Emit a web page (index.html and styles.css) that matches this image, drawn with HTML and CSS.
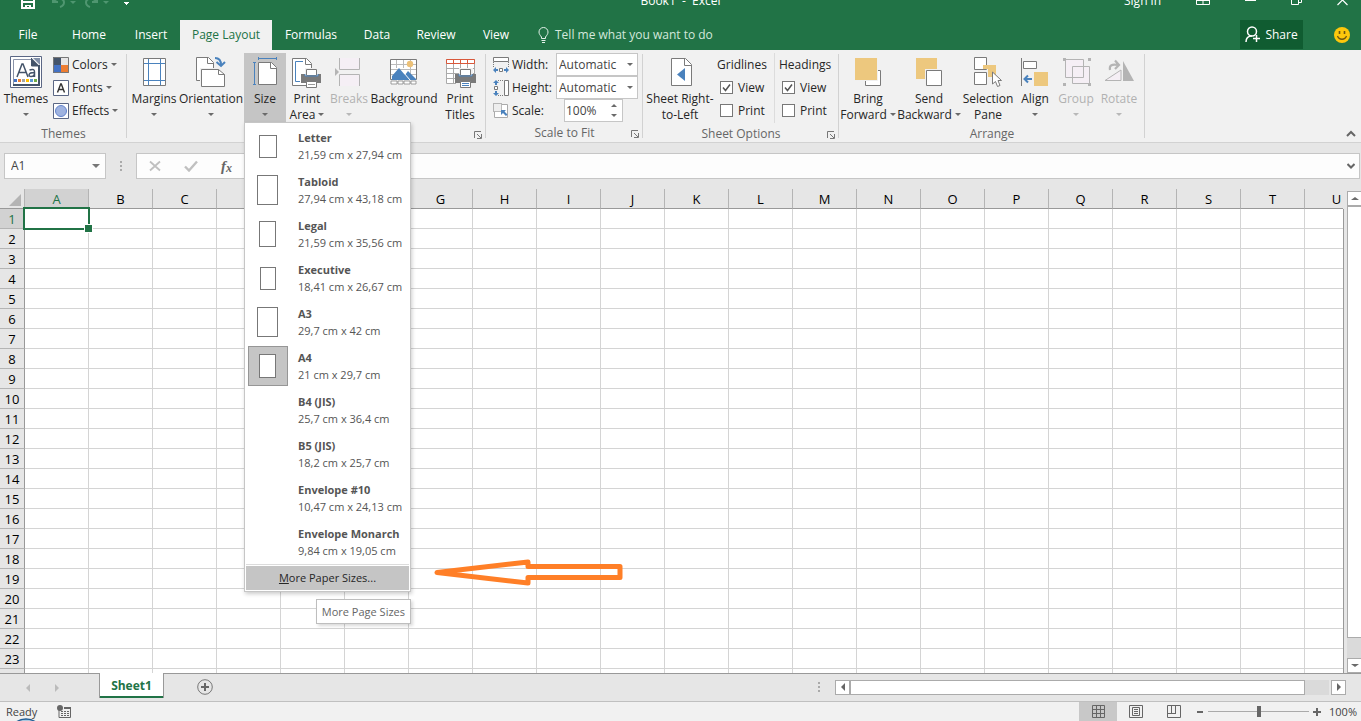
FILE: index.html
```html
<!DOCTYPE html>
<html lang="en">
<head>
<meta charset="utf-8">
<title>Book1 - Excel</title>
<link rel="stylesheet" href="styles.css">
</head>
<body>
<header class="top">
  <div class="titlebar">
    <div class="quick">
      <button class="plain" aria-label="Save"><svg width="14" height="16" viewBox="0 0 14 16"><path d="M1 2v13h12V2" fill="none" stroke="#fff" stroke-width="2"/><path d="M2 8h10v2H2zM4 15v-3h6v3H8v-2H6v2z" fill="#fff"/></svg></button>
      <button class="plain undo" aria-label="Undo"><svg width="26" height="16" viewBox="0 0 26 16"><path d="M2 5v4h5M2 9C6 4 13 5 13 9.500c0 2-1 3.500-4 4.500" fill="none" stroke="#4f9670" stroke-width="2"/><path d="M19 8h6l-3 3z" fill="#4f9670"/></svg></button>
      <button class="plain redo" aria-label="Redo"><svg width="26" height="16" viewBox="0 0 26 16"><path d="M13 5v4H8M13 9C9 4 2 5 2 9.500c0 2 1 3.500 4 4.500" fill="none" stroke="#4f9670" stroke-width="2"/><path d="M19 8h6l-3 3z" fill="#4f9670"/></svg></button>
      <button class="plain" aria-label="Customize"><svg width="7" height="16" viewBox="0 0 7 16"><path d="M1 6h5v1H1zM1 9h5v1h-1v1h-1v1h-1v-1h-1v-1h-1z" fill="#fff"/></svg></button>
    </div>
    <div class="doc-title">Book1&nbsp; - &nbsp;Excel</div>
    <div class="window">
      <a href="#" class="signin">Sign in</a>
      <button class="plain" aria-label="Ribbon display"><svg width="14" height="16" viewBox="0 0 14 16"><path d="M.5 3v8.500h13V3M.5 7.500h13M7 11V5" fill="none" stroke="#fff"/></svg></button>
      <button class="plain" aria-label="Minimize"><svg width="11" height="16" viewBox="0 0 11 16"><path d="M0 7.500h11" stroke="#fff"/></svg></button>
      <button class="plain" aria-label="Restore"><svg width="11" height="16" viewBox="0 0 11 16"><path d="M.5 5v6.500h7V5zM7 9.500h3.500V4" fill="none" stroke="#fff"/></svg></button>
      <button class="plain" aria-label="Close"><svg width="11" height="16" viewBox="0 0 11 16"><path d="M.5 2l10 10M10.500 2l-10 10" stroke="#fff" stroke-width="1.200"/></svg></button>
    </div>
  </div>
  <nav class="tabs">
    <button class="tab t-file">File</button>
    <button class="tab t-home">Home</button>
    <button class="tab t-insert">Insert</button>
    <button class="tab t-page active">Page Layout</button>
    <button class="tab t-formulas">Formulas</button>
    <button class="tab t-data">Data</button>
    <button class="tab t-review">Review</button>
    <button class="tab t-view">View</button>
    <button class="tell"><svg width="11" height="16" viewBox="0 0 11 16"><path d="M3.500 11.500V10C2 8 1 7 1 5a4.500 4.500 0 0 1 9 0c0 2-1 3-2.500 5v1.500zM3.500 13.500h4M4 15.500h3" fill="none" stroke="#e4f1ea"/></svg>Tell me what you want to do</button>
    <button class="share"><svg width="16" height="17" viewBox="0 0 16 17"><circle cx="7" cy="5.500" r="4.500" fill="none" stroke="#fff" stroke-width="1.500"/><path d="M1 16c0-4 2-6 6-6M11.500 9v7M8 12.500h7" fill="none" stroke="#fff" stroke-width="1.500"/></svg>Share</button>
    <button class="plain smile" aria-label="Feedback"><svg width="16" height="16" viewBox="0 0 16 16"><circle cx="8" cy="8" r="8" fill="#fdc70c"/><path d="M5.500 4v3M10.500 4v3" stroke="#6b5413" stroke-width="1.600"/><path d="M3.500 9c1.500 4.300 7.500 4.300 9 0" fill="none" stroke="#6b5413" stroke-width="1.300"/></svg></button>
  </nav>
</header>

<section class="ribbon">
  <div class="group g-themes">
    <div class="tools">
      <button class="big w-themes">
        <svg width="32" height="32" viewBox="0 0 32 32"><path d="M.5.500h31v31H.5z" fill="#fff" stroke="#5b6785"/><path d="M3.500 3.500h18l7 7v18h-25z" fill="#fff" stroke="#8a93a8"/><path d="M3 29h26V9" fill="none" stroke="#44546a" stroke-width="2"/><path d="M21.500 2v8h8" fill="#44546a" stroke="#44546a"/><path d="M23 2h7v7z" fill="#8290a8"/><path d="M7 21l5-13h1l5 13M9 16.500h7" fill="none" stroke="#44546a" stroke-width="1.500"/><path d="M19.500 14c4-1.500 5 0 5 2v5M24 16.500c-6 0-6 4-3 4 2 0 3-1 3-2" fill="none" stroke="#44546a" stroke-width="1.500"/><path d="M4 23h3v3H4z" fill="#4472c4"/><path d="M8 23h3v3H8z" fill="#ed7d31"/><path d="M12 23h3v3h-3z" fill="#a5a5a5"/><path d="M16 23h3v3h-3z" fill="#ffc000"/><path d="M20 23h3v3h-3z" fill="#5b9bd5"/><path d="M24 23h3v3h-3z" fill="#70ad47"/></svg>
        <span>Themes</span><i class="caret"></i>
      </button>
      <div class="stack">
        <button class="small"><svg width="16" height="16" viewBox="0 0 16 16"><path d="M0 0h8v8H0z" fill="#44546a"/><path d="M8 0h8v8H8z" fill="#e7e6e6"/><path d="M0 8h8v8H0z" fill="#4472c4"/><path d="M8 8h8v8H8z" fill="#ed7d31"/><path d="M.5.500h15v15H.5z" fill="none" stroke="#777"/></svg>Colors<i class="caret"></i></button>
        <button class="small"><svg width="16" height="16" viewBox="0 0 16 16"><path d="M.5.500h15v15H.5z" fill="#fff" stroke="#5b6785"/><path d="M4.500 12.500L7.700 4h.6l3.200 8.500M5.500 9.500h5" fill="none" stroke="#333" stroke-width="1.400"/></svg>Fonts<i class="caret"></i></button>
        <button class="small"><svg width="16" height="16" viewBox="0 0 16 16"><path d="M.5.500h15v15H.5z" fill="#fff" stroke="#5b6785"/><circle cx="8" cy="8" r="5.500" fill="#9fb3e0" stroke="#6484cc"/></svg>Effects<i class="caret"></i></button>
      </div>
    </div>
    <div class="caption">Themes</div>
  </div>

  <div class="group g-setup">
    <div class="tools">
      <button class="big w-margins">
        <svg width="32" height="32" viewBox="0 0 32 32"><path d="M5.500 2.500h22v27h-22z" fill="#fff" stroke="#7a7a7a"/><path d="M10.500 3v26M22.500 3v26M6 7.500h21M6 24.500h21" stroke="#4a82bd"/></svg>
        <span>Margins</span><i class="caret"></i>
      </button>
      <button class="big w-orient">
        <svg width="32" height="32" viewBox="0 0 32 32"><path d="M1.500 1.500h12l5 5v18h-17z" fill="#fff" stroke="#7a7a7a"/><path d="M12.500 1.500v6h6" fill="none" stroke="#7a7a7a"/><path d="M5 12h27v20H5z" fill="#f0f0f0"/><path d="M6.500 13.500h17l6 5v12h-23z" fill="#fff" stroke="#7a7a7a"/><path d="M23.500 13.500v5h6" fill="none" stroke="#7a7a7a"/><path d="M20 2c4 0 6 2 6 7" fill="none" stroke="#4a82bd" stroke-width="2"/><path d="M21.500 6l4.500 4 4-4" fill="none" stroke="#4a82bd" stroke-width="2"/></svg>
        <span>Orientation</span><i class="caret"></i>
      </button>
      <div class="dropdown">
        <button class="big w-size open" aria-haspopup="true" aria-expanded="true">
          <svg width="32" height="32" viewBox="0 0 32 32"><path d="M9.500 6.500h13l5 5v17h-18z" fill="#fff" stroke="#7a7a7a"/><path d="M21.500 6.500v6h6" fill="none" stroke="#7a7a7a"/><path d="M9 2.500h18M9.500 1v3M27.500 1v3M5.500 6v23M4 6.500h3M4 28.500h3" stroke="#4a82bd"/></svg>
          <span>Size</span><i class="caret"></i>
        </button>
        <div class="menu">
          <button class="paper"><span class="thumb"><i class="p-letter"></i></span><span><b>Letter</b><br>21,59 cm x 27,94 cm</span></button>
          <button class="paper"><span class="thumb"><i class="p-tabloid"></i></span><span><b>Tabloid</b><br>27,94 cm x 43,18 cm</span></button>
          <button class="paper"><span class="thumb"><i class="p-legal"></i></span><span><b>Legal</b><br>21,59 cm x 35,56 cm</span></button>
          <button class="paper"><span class="thumb"><i class="p-exec"></i></span><span><b>Executive</b><br>18,41 cm x 26,67 cm</span></button>
          <button class="paper"><span class="thumb"><i class="p-tabloid"></i></span><span><b>A3</b><br>29,7 cm x 42 cm</span></button>
          <button class="paper"><span class="thumb chosen"><i class="p-a4"></i></span><span><b>A4</b><br>21 cm x 29,7 cm</span></button>
          <button class="paper"><span class="thumb"></span><span><b>B4 (JIS)</b><br>25,7 cm x 36,4 cm</span></button>
          <button class="paper"><span class="thumb"></span><span><b>B5 (JIS)</b><br>18,2 cm x 25,7 cm</span></button>
          <button class="paper"><span class="thumb"></span><span><b>Envelope #10</b><br>10,47 cm x 24,13 cm</span></button>
          <button class="paper"><span class="thumb"></span><span><b>Envelope Monarch</b><br>9,84 cm x 19,05 cm</span></button>
          <button class="more"><span><u>M</u>ore Paper Sizes...</span></button>
          <div class="tip" role="tooltip">More Page Sizes</div>
        </div>
      </div>
      <button class="big w-area">
        <svg width="32" height="32" viewBox="0 0 32 32"><path d="M1.500 2.500h14l5 5v22h-19z" fill="#fff" stroke="#7a7a7a"/><path d="M14.500 2.500v6h6" fill="none" stroke="#7a7a7a"/><path d="M12 5.500H4.500v20H9" fill="none" stroke="#4a82bd"/><path d="M14 12h14v6H14z" fill="#f0f0f0"/><path d="M15.500 13.500h10v6h-10z" fill="#fff" stroke="#7a7a7a"/><path d="M10 18h4v2h13v-2h3v9H10z" fill="#7a7a7a"/><path d="M14 18v2h13v-2" fill="none" stroke="#4a82bd"/><path d="M15.500 25.500h10v6h-10z" fill="#fff" stroke="#7a7a7a"/><path d="M17 28.500h7" stroke="#999"/></svg>
        <span>Print</span><span>Area<i class="caret side"></i></span>
      </button>
      <button class="big w-breaks off" disabled>
        <svg width="32" height="32" viewBox="0 0 32 32"><path d="M6 2h20v12H6zM6 19h20v11H6z" fill="#f5eff5"/><path d="M6.500 2v11.500h20V2M6.500 30V18.500h20V30" fill="none" stroke="#b4b4b4"/><path d="M2 12l4 4-4 4z" fill="#b4b4b4"/></svg>
        <span>Breaks</span><i class="caret"></i>
      </button>
      <button class="big w-back">
        <svg width="32" height="32" viewBox="0 0 32 32"><path d="M2.500 3.500h26v20h-26z" fill="#fff" stroke="#7a7a7a"/><path d="M8.500 4v8M15.500 4v8M22.500 4v19M3 8.500h25M3 13.500h25M3 18.500h25" stroke="#bbb"/><circle cx="22" cy="8" r="3.200" fill="#ecc178"/><path d="M4 24v-4l7-8 6 7 3-4 8 8v1z" fill="#4a82bd"/><path d="M16 17l6 7" stroke="#fff"/><path d="M3 25h6v3H3zM10 25h5v3h-5zM16 25h6v3h-6zM23 25h5v3h-5z" fill="#fff" stroke="#888" stroke-width=".8"/></svg>
        <span>Background</span>
      </button>
      <button class="big w-titles">
        <svg width="32" height="32" viewBox="0 0 32 32"><path d="M2.500 3.500h28v24h-28z" fill="#fff" stroke="#aaa"/><path d="M9.500 4v23M16.500 4v23M23.500 4v14M3 12.500h27M3 17.500h27M3 22.500h14" stroke="#aaa"/><path d="M2.500 3.500h28v4h-28zM9.500 3v5M16.500 3v5M23.500 3v5" fill="none" stroke="#d9583b"/><path d="M12 18h3v-6h14v6h3v14H15v-4h-3z" fill="#f0f0f0"/><path d="M16.500 13.500h10v6h-10z" fill="#fff" stroke="#7a7a7a"/><path d="M11 18h4v2h13v-2h4v9H11z" fill="#7a7a7a"/><path d="M15 18v2h13v-2" fill="none" stroke="#4a82bd"/><path d="M16.500 25.500h10v6h-10z" fill="#fff" stroke="#7a7a7a"/><path d="M18 27.500h7M18 29.500h7" stroke="#4a82bd"/></svg>
        <span>Print</span><span>Titles</span>
      </button>
    </div>
    <div class="caption"><button class="plain launch" aria-label="Page setup options"><svg width="8" height="8" viewBox="0 0 8 8"><path d="M.5 7V.5H7M3 3l4 4M7.500 3v4.500H3" fill="none" stroke="#777"/></svg></button></div>
  </div>

  <div class="group g-scale">
    <div class="tools">
      <div class="stack">
        <div class="field"><svg width="16" height="16" viewBox="0 0 16 16"><path d="M.5.500h15v4H.5z" fill="#fff" stroke="#7a7a7a"/><path d="M.5 5v6M15.500 5v6" stroke="#7a7a7a" stroke-dasharray="1 1"/><path d="M6.500 11.500h3v3h-3z" fill="#fff" stroke="#7a7a7a"/><path d="M0 13l3-3v2h2v2H3v2zM16 13l-3-3v2h-2v2h2v2z" fill="#4a82bd"/></svg><label for="w">Width:</label><span class="combo"><select id="w"><option>Automatic</option></select><i class="caret"></i></span></div>
        <div class="field"><svg width="16" height="16" viewBox="0 0 16 16"><path d="M11.500.500h4v15h-4z" fill="#fff" stroke="#7a7a7a"/><path d="M5 .5h6M5 15.500h6" stroke="#7a7a7a" stroke-dasharray="1 1"/><path d="M1.500 6.500h3v3h-3z" fill="#fff" stroke="#7a7a7a"/><path d="M3 0l3 3H4v2H2V3H0zM3 16l3-3H4v-2H2v2H0z" fill="#4a82bd"/></svg><label for="h">Height:</label><span class="combo"><select id="h"><option>Automatic</option></select><i class="caret"></i></span></div>
        <div class="field"><svg width="16" height="16" viewBox="0 0 16 16"><path d="M1.500 9v5.500h13v-13H9" fill="#fff" stroke="#aaa"/><path d="M.5.500h8v8h-8z" fill="#eee" stroke="#7a7a7a" stroke-dasharray="1 1"/><path d="M8 7h5l-1.500 1.500 3 3-1.500 1.500-3-3L8 12z" fill="#4a82bd"/></svg><label for="s">Scale:</label><span class="spin"><input id="s" type="text" value="100%"><span class="arrows"><button class="plain" aria-label="Increase"><i class="caret up"></i></button><button class="plain" aria-label="Decrease"><i class="caret"></i></button></span></span></div>
      </div>
    </div>
    <div class="caption">Scale to Fit<button class="plain launch" aria-label="Scale options"><svg width="8" height="8" viewBox="0 0 8 8"><path d="M.5 7V.5H7M3 3l4 4M7.500 3v4.500H3" fill="none" stroke="#777"/></svg></button></div>
  </div>

  <div class="group g-sheet">
    <div class="tools">
      <button class="big w-rtl">
        <svg width="32" height="32" viewBox="0 0 32 32"><path d="M7.500 2.500h14l6 6v21h-20z" fill="#fff" stroke="#7a7a7a"/><path d="M20.500 2.500v7h7" fill="none" stroke="#7a7a7a"/><path d="M21 12v13l-8-6.500z" fill="#4a82bd"/></svg>
        <span>Sheet Right-</span><span>to-Left</span>
      </button>
      <div class="stack checks c-grid"><span class="head">Gridlines</span><label><input type="checkbox" checked>View</label><label><input type="checkbox">Print</label></div>
      <div class="stack checks c-head"><span class="head">Headings</span><label><input type="checkbox" checked>View</label><label><input type="checkbox">Print</label></div>
    </div>
    <div class="caption">Sheet Options<button class="plain launch" aria-label="Sheet options"><svg width="8" height="8" viewBox="0 0 8 8"><path d="M.5 7V.5H7M3 3l4 4M7.500 3v4.500H3" fill="none" stroke="#777"/></svg></button></div>
  </div>

  <div class="group g-arrange">
    <div class="tools">
      <button class="big w-58">
        <svg width="32" height="32" viewBox="0 0 32 32"><path d="M13.500 14.500h15v15h-15z" fill="#fff" stroke="#7a7a7a"/><path d="M3 2h22v22H3z" fill="#edc87e" /><path d="M25.500 2v22.500H3" fill="none" stroke="#f0f0f0"/></svg>
        <span>Bring</span><span>Forward<i class="caret side"></i></span>
      </button>
      <button class="big w-64">
        <svg width="32" height="32" viewBox="0 0 32 32"><path d="M3 2h21v21H3z" fill="#edc87e"/><path d="M12 13h18v18H12z" fill="#f0f0f0"/><path d="M13.500 14.500h15v15h-15z" fill="#fff" stroke="#7a7a7a"/></svg>
        <span>Send</span><span>Backward<i class="caret side"></i></span>
      </button>
      <button class="big w-54">
        <svg width="32" height="32" viewBox="0 0 32 32"><path d="M2.500 1.500h12v12h-12zM2.500 16.500h12v12h-12z" fill="#fff" stroke="#7a7a7a"/><path d="M11 9h13v12h-8v-8h-5z" fill="#edc87e"/><path d="M20.500 16v12l3-2.500 2 5 2.500-1-2-5h3.500z" fill="#fff" stroke="#7a7a7a"/></svg>
        <span>Selection</span><span>Pane</span>
      </button>
      <button class="big w-40">
        <svg width="32" height="32" viewBox="0 0 32 32"><path d="M2.500 2v28" stroke="#7a7a7a"/><path d="M4.500 5.500h13v7h-13z" fill="#fff" stroke="#7a7a7a"/><path d="M15 16h14v14H15z" fill="#edc87e"/><path d="M13 23H6M9 19.500L5.500 23 9 26.500" fill="none" stroke="#4a82bd" stroke-width="2"/></svg>
        <span>Align</span><i class="caret"></i>
      </button>
      <button class="big w-42 off" disabled>
        <svg width="32" height="32" viewBox="0 0 32 32"><path d="M5.500 3.500h18v18h-18zM12.500 10.500h17v17h-17z" fill="#f5eff5"/><path d="M5.500 3.500h18v18h-18zM12.500 10.500h17v17h-17z" fill="none" stroke="#b4b4b4"/><path d="M3 2h3v3H3zM28 2h3v3h-3zM3 27h3v3H3zM28 27h3v3h-3z" fill="#b4b4b4"/></svg>
        <span>Group</span><i class="caret"></i>
      </button>
      <button class="big w-44 off" disabled>
        <svg width="32" height="32" viewBox="0 0 32 32"><path d="M18 14v10.500H2z" fill="#f5eff5" stroke="#b4b4b4"/><path d="M20 5v20h11z" fill="#b4b4b4"/><path d="M7 14c-1-5 2-6 8-5M12 4.500l4 4.500-4 4" fill="none" stroke="#b4b4b4" stroke-width="2.200"/></svg>
        <span>Rotate</span><i class="caret"></i>
      </button>
    </div>
    <div class="caption">Arrange</div>
  </div>
  <button class="plain collapse" aria-label="Collapse ribbon"><svg width="10" height="7" viewBox="0 0 10 7"><path d="M1 6l4-4 4 4" fill="none" stroke="#666" stroke-width="2"/></svg></button>
</section>

<section class="formula">
  <div class="namebox"><input type="text" value="A1" aria-label="Name box"><svg width="8" height="4" viewBox="0 0 8 4"><path d="M0 0h8L4 4z" fill="#777"/></svg></div>
  <span class="dots"><i></i><i></i><i></i></span>
  <div class="entry">
    <button class="plain" aria-label="Cancel"><svg width="12" height="12" viewBox="0 0 12 12"><path d="M1 1.500l10 9M11 1.500l-10 9" stroke="#c0c0c0" stroke-width="1.800"/></svg></button>
    <button class="plain" aria-label="Enter"><svg width="14" height="12" viewBox="0 0 14 12"><path d="M1 6.500l4 4 8-9" fill="none" stroke="#c0c0c0" stroke-width="2.400"/></svg></button>
    <button class="plain fx">f<small>x</small></button>
    <input type="text" aria-label="Formula bar">
    <button class="plain" aria-label="Expand"><svg width="8" height="6" viewBox="0 0 8 6"><path d="M.5 1L4 4.500 7.500 1" fill="none" stroke="#666" stroke-width="2"/></svg></button>
  </div>
</section>

<main class="sheet">
  <div class="cells"><table id="grid"></table></div>
  <div class="edge"></div>
  <div class="vscroll">
    <button class="plain sbtn" aria-label="Scroll up"><i class="caret up"></i></button>
    <div class="vthumb"></div>
    <div class="vtrack"></div>
    <button class="plain sbtn" aria-label="Scroll down"><i class="caret"></i></button>
  </div>
  <svg class="pointer" width="192" height="32" viewBox="0 0 192 32"><path d="M4 15.500L95 5v4.500h92v11H95V26z" fill="none" stroke="#ff7f27" stroke-width="5" stroke-linejoin="round"/></svg>
</main>

<footer>
  <div class="sheetbar">
    <div class="nav">
      <button class="plain" aria-label="Previous sheet"><svg width="4" height="8" viewBox="0 0 4 8"><path d="M4 0v8L0 4z" fill="#bbb"/></svg></button>
      <button class="plain" aria-label="Next sheet"><svg width="4" height="8" viewBox="0 0 4 8"><path d="M0 0v8l4-4z" fill="#bbb"/></svg></button>
    </div>
    <button class="sheet-tab">Sheet1</button>
    <button class="plain add" aria-label="New sheet"><svg width="16" height="16" viewBox="0 0 16 16"><circle cx="8" cy="8" r="7.300" fill="none" stroke="#777"/><path d="M8 4v8M4 8h8" stroke="#666" stroke-width="2"/></svg></button>
    <span class="dots hdots"><i></i><i></i><i></i></span>
    <div class="hscroll">
      <button class="plain hbtn" aria-label="Scroll left"><svg width="4" height="8" viewBox="0 0 4 8"><path d="M4 0v8L0 4z" fill="#666"/></svg></button>
      <div class="hthumb"></div>
      <div class="htrack"></div>
      <button class="plain hbtn" aria-label="Scroll right"><svg width="4" height="8" viewBox="0 0 4 8"><path d="M0 0v8l4-4z" fill="#666"/></svg></button>
    </div>
  </div>
  <div class="status">
    <span class="ready">Ready</span>
    <svg width="14" height="13" viewBox="0 0 14 13"><path d="M2 5v7.500h11.500V3H8" fill="none" stroke="#666"/><circle cx="3" cy="3" r="3" fill="#666"/><path d="M7 2h7v2H7z" fill="#666"/><path d="M4 6.500h2M7 6.500h2M10 6.500h2M4 8.500h2M7 8.500h2M10 8.500h2M4 10.500h2M7 10.500h2M10 10.500h2" stroke="#666"/></svg>
    <svg class="orb" width="24" height="3" viewBox="0 0 24 3"><ellipse cx="12" cy="12" rx="14" ry="11" fill="#a9c8e0" stroke="#1f5c94" stroke-width="1.500"/></svg>
    <div class="views">
      <button class="plain on" aria-label="Normal"><svg width="13" height="13" viewBox="0 0 13 13"><path d="M.5.500h12v12H.5zM4.500 0v13M8.500 0v13M0 4.500h13M0 8.500h13" fill="none" stroke="#666"/></svg></button>
      <button class="plain" aria-label="Page layout"><svg width="14" height="13" viewBox="0 0 14 13"><path d="M.5.500h13v12H.5zM3.500 2.500h7v8h-7zM5 4.500h4M5 6.500h4M5 8.500h4" fill="none" stroke="#666"/></svg></button>
      <button class="plain" aria-label="Page break"><svg width="14" height="13" viewBox="0 0 14 13"><path d="M.5.500h13v12H.5zM4.500 1v7M8.500 1v7.500M1 8.500h8" fill="none" stroke="#666"/></svg></button>
    </div>
    <div class="zoom">
      <button class="plain" aria-label="Zoom out"><svg width="7" height="8" viewBox="0 0 7 8"><path d="M0 4h6" stroke="#666" stroke-width="2"/></svg></button>
      <input type="range" min="10" max="190" value="100" aria-label="Zoom">
      <button class="plain" aria-label="Zoom in"><svg width="8" height="8" viewBox="0 0 8 8"><path d="M0 4h8M4 0v8" stroke="#666" stroke-width="2"/></svg></button>
      <button class="plain pct">100%</button>
    </div>
  </div>
</footer>
<script src="grid.js"></script>
</body>
</html>
```
FILE: styles.css
```css
* { box-sizing: border-box; }
body {
  margin: 0; height: 100vh; overflow: hidden;
  display: flex; flex-direction: column;
  font: 12px/16px "Open Sans", "Noto Sans", sans-serif;
  color: #262626; background: #e6e6e6;
}
button, input, select { font: inherit; color: inherit; margin: 0; }
button { border: 0; background: none; padding: 0; white-space: nowrap; }
.plain { display: flex; align-items: center; justify-content: center; }
svg { display: block; flex: none; }
.caret { display: block; width: 0; height: 0; border: 3px solid transparent; border-top-color: #6a6a6a; border-bottom: 0; }
.caret.up { border-top: 0; border-bottom: 3px solid #6a6a6a; }

.top { background: #217346; color: #fff; }
.titlebar { height: 20px; overflow: hidden; display: grid; grid-template-columns: 1fr auto 1fr; }
.titlebar > * { margin-top: -7px; height: 16px; display: flex; align-items: center; }
.quick { padding-left: 21px; }
.undo { margin-left: 16px; }
.redo { margin: 0 13px 0 7px; }
.window { justify-content: flex-end; padding-right: 13px; gap: 35px; }
.window a { color: #fff; text-decoration: none; }

.tabs { height: 30px; display: flex; }
.tab { height: 30px; text-align: center; }
.tab.active { background: #f1f1f1; color: #217346; }
.t-file { width: 56px; }
.t-home { width: 66px; }
.t-insert { width: 58px; }
.t-page { width: 92px; }
.t-formulas { width: 78px; }
.t-data { width: 54px; }
.t-review { width: 64px; }
.t-view { width: 56px; }
.tell { margin: 0 auto 0 14px; display: flex; align-items: center; gap: 6px; color: #d3e8dc; }
.share { width: 63px; height: 29px; background: #105c31; display: flex; align-items: center; justify-content: center; gap: 4px; }
.smile { margin: 0 11px 0 31px; }

.ribbon { height: 93px; background: #f1f1f1; border-bottom: 1px solid #d2d2d2; display: flex; }
.group { margin: 3px 0 4px; position: relative; display: flex; flex-direction: column; flex: none; }
.group::after { content: ""; position: absolute; right: 0; top: 1px; bottom: 0; width: 1px; background: #d2d2d2; }
.g-themes { width: 127px; }
.g-setup { width: 359px; }
.g-scale { width: 157px; }
.g-sheet { width: 196px; }
.g-arrange { width: 306px; }
.tools { display: flex; height: 70px; }
.caption { position: relative; height: 16px; flex: none; margin-top: 3px; color: #666; text-align: center; }
.launch { position: absolute; right: 4px; top: 5px; }
.big { height: 70px; padding-top: 3px; display: flex; flex-direction: column; align-items: center; flex: none; }
.big svg { margin-bottom: 3px; }
.big > span { height: 16px; }
.big > .caret { margin-top: 6px; }
.side { display: inline-block; margin-left: 3px; vertical-align: 3px; }
.off { color: #b1b1b1; }
.off .caret { border-top-color: #b8b8b8; }
.open { background: #c5c5c5; }
.w-themes { width: 52px; }
.g-setup .tools { padding-left: 3px; }
.w-margins { width: 48px; }
.w-orient { width: 66px; }
.w-size, .w-area, .w-breaks, .w-42 { width: 42px; }
.w-back { width: 68px; }
.w-titles, .w-44 { width: 44px; }
.w-rtl { width: 74px; }
.w-58 { width: 58px; }
.w-64 { width: 64px; }
.w-54 { width: 54px; }
.w-40 { width: 40px; }

.stack { display: flex; flex-direction: column; }
.small { height: 23px; display: flex; align-items: center; gap: 3px; padding-left: 1px; }
.field { height: 23px; width: 152px; display: flex; align-items: center; padding-left: 7px; gap: 3px; }
.combo, .spin { margin-left: auto; height: 23px; border: 1px solid #c6c6c6; background: #fff; display: flex; align-items: center; color: #444; }
.combo { width: 82px; }
.combo select { appearance: none; border: 0; background: none; outline: 0; flex: 1; min-width: 0; padding: 0 0 0 2px; }
.combo .caret { margin-right: 4px; }
.spin { width: 59px; margin-right: 15px; }
.spin input { border: 0; outline: 0; background: none; padding: 0 0 0 1px; width: 46px; }
.arrows { display: flex; flex-direction: column; gap: 7px; }
.checks { width: 62px; }
.checks > * { height: 23px; display: flex; align-items: center; white-space: nowrap; }
.checks label { gap: 5px; padding-left: 3px; }
.c-grid { width: 56px; margin-right: 1px; }
.c-head { border-left: 1px solid #dcdcdc; padding-left: 4px; }
.checks input {
  appearance: none; width: 13px; height: 13px; border: 1px solid #777; background: #fff; flex: none;
}
.checks input:checked {
  background: #fff url("data:image/svg+xml,%3Csvg xmlns='http://www.w3.org/2000/svg' viewBox='0 0 11 11'%3E%3Cpath d='M2 5.500l2.500 3L9 2.500' fill='none' stroke='%23555' stroke-width='1.500'/%3E%3C/svg%3E");
}
.collapse { margin: auto 5px 5px auto; }

.dropdown { position: relative; }
.menu {
  position: absolute; left: 0; top: 69px; z-index: 5; width: 167px;
  background: #fff; border: 1px solid #c6c6c6; padding: 1px;
  box-shadow: 1px 2px 4px rgba(0, 0, 0, .2); color: #555; font-size: 11px;
}
.paper { display: flex; align-items: center; gap: 10px; height: 44px; padding-left: 2px; text-align: left; line-height: 17px; }
.thumb { width: 40px; height: 40px; display: flex; align-items: center; justify-content: center; border: 1px solid transparent; padding-right: 1px; }
.thumb.chosen { background: #c5c5c5; border-color: #969696; }
.thumb i { border: 1px solid #777; background: #fff; }
.p-letter { width: 18px; height: 23px; }
.p-tabloid { width: 21px; height: 30px; }
.p-legal { width: 17px; height: 26px; }
.p-exec { width: 16px; height: 23px; }
.p-a4 { width: 17px; height: 24px; }
.more { position: relative; display: block; width: 100%; height: 24px; margin-top: 2px; background: #c5c5c5; color: #262626; }
.more::before { content: ""; position: absolute; left: 0; right: 0; top: -2px; height: 1px; background: #dcdcdc; }
.tip {
  position: absolute; right: -1px; top: calc(100% + 8px); height: 25px; line-height: 23px; padding: 0 5px;
  background: #fff; border: 1px solid #bebebe; white-space: nowrap; color: #666;
  box-shadow: 2px 2px 3px rgba(0, 0, 0, .15);
}

.formula { display: flex; align-items: center; padding: 10px 1px 10px 4px; }
.namebox, .entry { height: 26px; background: #fdfdfd; border: 1px solid #c6c6c6; display: flex; align-items: center; }
.namebox { width: 102px; padding-right: 5px; }
.namebox input, .entry input { border: 0; outline: 0; background: none; min-width: 0; flex: 1; padding: 0 0 0 6px; color: #444; }
.dots { display: flex; flex-direction: column; gap: 2px; margin: 0 14px; }
.dots i { width: 2px; height: 2px; background: #aaa; }
.entry { flex: 1; padding: 0 4px 0 12px; gap: 23px; }
.fx { font: italic bold 15px/16px "Liberation Serif", serif; color: #666; }
.fx small { font-size: 12px; padding-top: 4px; }

.sheet { flex: 1; min-height: 0; position: relative; display: flex; border-bottom: 1px solid #999; }
.cells { flex: 1; min-width: 0; overflow: hidden; }
.cells table { table-layout: fixed; width: 0; border-collapse: separate; border-spacing: 0; font-size: 13px; line-height: 18px; }
.cells th, .cells td { padding: 0; height: 20px; overflow: visible; }
.cells td { background: #fff; border: solid #d4d4d4; border-width: 0 1px 1px 0; }
.cells th { font-weight: 400; color: #000; background: #e6e6e6; border-right: 1px solid #b4b4b4; border-bottom: 1px solid #999; }
.cells .num { border-right-color: #999; border-bottom-color: #b4b4b4; }
.cells .sel { background: #d2d2d2; color: #217346; }
.c-num { width: 25px; }
.c-col { width: 64px; }
.corner::after { content: ""; display: block; margin: 3px 3px 0 auto; width: 12px; height: 12px; background: #b4b4b4; clip-path: polygon(100% 0, 100% 100%, 0 100%); }
.active-cell { position: relative; }
.active-cell::before { content: ""; position: absolute; inset: -2px; border: 2px solid #217346; }
.active-cell::after { content: ""; position: absolute; right: -5px; bottom: -5px; width: 7px; height: 7px; background: #217346; border: 1px solid #fff; }
.edge { width: 1px; margin-top: 20px; background: #999; }
.vscroll { width: 17px; padding: 2px 0 0 3px; display: flex; flex-direction: column; }
.sbtn, .vthumb { border: 1px solid #ababab; border-right: 0; background: #fff; }
.sbtn { height: 15px; }
.sbtn .caret { border-left-width: 4px; border-right-width: 4px; }
.vthumb { flex: 1; }
.vtrack { height: 20px; background: #dadada; }
.pointer { position: absolute; left: 433px; top: 368px; }

.sheetbar { height: 28px; display: flex; align-items: center; border-bottom: 1px solid #c0c0c0; }
.nav { width: 99px; display: flex; gap: 25px; padding-left: 26px; }
.sheet-tab { align-self: flex-start; width: 65px; height: 25px; margin-top: -1px; background: #fff; border: solid #999; border-width: 0 1px; box-shadow: inset 0 -2px #217346; font-weight: 700; color: #217346; z-index: 1; }
.add { margin: 0 auto 2px 33px; }
.hdots { margin: 0 15px 2px; }
.hscroll { width: 511px; height: 15px; margin: 0 15px 1px 0; display: flex; }
.hbtn { width: 15px; border: 1px solid #ababab; background: #fff; }
.hthumb { flex: 1; border: 1px solid #ababab; background: #fff; }
.htrack { width: 24px; background: #dadada; margin-right: 2px; }
.status { height: 19px; background: #f1f1f1; display: flex; align-items: center; padding-left: 6px; color: #444; font-size: 11px; position: relative; }
.ready { width: 51px; }
.orb { position: absolute; left: 14px; bottom: 0; }
.views { margin-left: auto; display: flex; align-self: stretch; }
.views button { width: 38px; }
.views .on { background: #c8c8c8; }
.zoom { display: flex; align-items: center; padding: 0 4px; gap: 4px; }
.zoom input { appearance: none; width: 101px; height: 12px; background: linear-gradient(#aaa, #aaa) center / 100% 1px no-repeat; }
.zoom input::-webkit-slider-thumb { appearance: none; width: 4px; height: 11px; background: #666; }
.pct { margin-left: 4px; }
```
FILE: grid.js
```js
const grid = document.getElementById("grid");
const letters = "ABCDEFGHIJKLMNOPQRSTUVWXYZ".split("");
let html = '<colgroup><col class="c-num">' + letters.map(() => '<col class="c-col">').join("") + "</colgroup>";
html += '<thead><tr><th class="corner"></th>' +
  letters.map((l, i) => `<th scope="col"${i === 0 ? ' class="sel"' : ""}>${l}</th>`).join("") + "</tr></thead><tbody>";
for (let r = 1; r <= 40; r++) {
  html += `<tr><th scope="row" class="num${r === 1 ? " sel" : ""}">${r}</th>` +
    letters.map((l, i) => `<td${r === 1 && i === 0 ? ' class="active-cell"' : ""}></td>`).join("") + "</tr>";
}
grid.innerHTML = html + "</tbody>";
```
